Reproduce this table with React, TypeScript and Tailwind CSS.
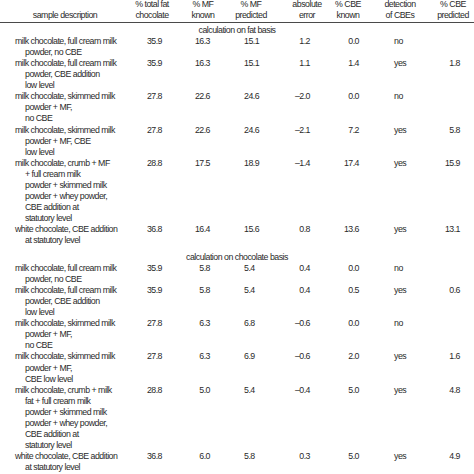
import React from "react";

type Row = {
  desc: string[];
  fat: string;
  mfKnown: string;
  mfPred: string;
  err: string;
  cbeKnown: string;
  detect: string;
  cbePred: string;
};

const fatBasis: Row[] = [
  { desc: ["milk chocolate, full cream milk", "powder, no CBE"], fat: "35.9", mfKnown: "16.3", mfPred: "15.1", err: "1.2", cbeKnown: "0.0", detect: "no", cbePred: "" },
  { desc: ["milk chocolate, full cream milk", "powder, CBE addition", "low level"], fat: "35.9", mfKnown: "16.3", mfPred: "15.1", err: "1.1", cbeKnown: "1.4", detect: "yes", cbePred: "1.8" },
  { desc: ["milk chocolate, skimmed milk", "powder + MF,", "no CBE"], fat: "27.8", mfKnown: "22.6", mfPred: "24.6", err: "–2.0", cbeKnown: "0.0", detect: "no", cbePred: "" },
  { desc: ["milk chocolate, skimmed milk", "powder + MF, CBE", "low level"], fat: "27.8", mfKnown: "22.6", mfPred: "24.6", err: "–2.1", cbeKnown: "7.2", detect: "yes", cbePred: "5.8" },
  { desc: ["milk chocolate, crumb + MF", "+ full cream milk", "powder + skimmed milk", "powder + whey powder,", "CBE addition at", "statutory level"], fat: "28.8", mfKnown: "17.5", mfPred: "18.9", err: "–1.4", cbeKnown: "17.4", detect: "yes", cbePred: "15.9" },
  { desc: ["white chocolate, CBE addition", "at statutory level"], fat: "36.8", mfKnown: "16.4", mfPred: "15.6", err: "0.8", cbeKnown: "13.6", detect: "yes", cbePred: "13.1" },
];

const chocBasis: Row[] = [
  { desc: ["milk chocolate, full cream milk", "powder, no CBE"], fat: "35.9", mfKnown: "5.8", mfPred: "5.4", err: "0.4", cbeKnown: "0.0", detect: "no", cbePred: "" },
  { desc: ["milk chocolate, full cream milk", "powder, CBE addition", "low level"], fat: "35.9", mfKnown: "5.8", mfPred: "5.4", err: "0.4", cbeKnown: "0.5", detect: "yes", cbePred: "0.6" },
  { desc: ["milk chocolate, skimmed milk", "powder + MF,", "no CBE"], fat: "27.8", mfKnown: "6.3", mfPred: "6.8", err: "–0.6", cbeKnown: "0.0", detect: "no", cbePred: "" },
  { desc: ["milk chocolate, skimmed milk", "powder + MF,", "CBE low level"], fat: "27.8", mfKnown: "6.3", mfPred: "6.9", err: "–0.6", cbeKnown: "2.0", detect: "yes", cbePred: "1.6" },
  { desc: ["milk chocolate, crumb + milk", "fat + full cream milk", "powder + skimmed milk", "powder + whey powder,", "CBE addition at", "statutory level"], fat: "28.8", mfKnown: "5.0", mfPred: "5.4", err: "–0.4", cbeKnown: "5.0", detect: "yes", cbePred: "4.8" },
  { desc: ["white chocolate, CBE addition", "at statutory level"], fat: "36.8", mfKnown: "6.0", mfPred: "5.8", err: "0.3", cbeKnown: "5.0", detect: "yes", cbePred: "4.9" },
];

function HeadCell({ top, bottom, className }: { top?: string; bottom: string; className: string }) {
  return (
    <div className={`flex flex-col items-center whitespace-nowrap ${className}`}>
      <span>{top ?? "\u00a0"}</span>
      <span>{bottom}</span>
    </div>
  );
}

function DataRow({ row }: { row: Row }) {
  return (
    <div className="flex items-start whitespace-nowrap">
      <div className="w-[130px] pl-[15px]">
        {row.desc.map((line, i) => (
          <div key={i} className={i > 0 ? "pl-[10px]" : ""}>
            {line}
          </div>
        ))}
      </div>
      <div className="w-[32px] text-right">{row.fat}</div>
      <div className="w-[48px] text-right">{row.mfKnown}</div>
      <div className="w-[60px] pl-[34px]">{row.mfPred}</div>
      <div className="w-[40px] text-right">{row.err}</div>
      <div className="w-[49px] text-right">{row.cbeKnown}</div>
      <div className="w-[61px] pl-[35px]">{row.detect}</div>
      <div className="w-[40px] text-right">{row.cbePred}</div>
    </div>
  );
}

export default function App() {
  return (
    <div
      className="w-[474px] h-[474px] overflow-hidden bg-white text-[#2a2a2a] text-[8.8px] tracking-[-0.5px] leading-[11.05px]"
      style={{ fontFamily: "'Liberation Sans', Arial, sans-serif" }}
    >
      {/* header */}
      <div className="-mt-[1.5px] pb-[1.5px] flex border-b border-[#4a4a4a]">
        <HeadCell bottom="sample description" className="w-[130px]" />
        <HeadCell top="% total fat" bottom="chocolate" className="w-[40px] ml-[2px]" />
        <HeadCell top="% MF" bottom="known" className="w-[40px] ml-[11px]" />
        <HeadCell top="% MF" bottom="predicted" className="w-[40px] ml-[8px]" />
        <HeadCell top="absolute" bottom="error" className="w-[40px] ml-[16px]" />
        <HeadCell top="% CBE" bottom="known" className="w-[40px] ml-[1px]" />
        <HeadCell top="detection" bottom="of CBEs" className="w-[40px] ml-[12px]" />
        <HeadCell top="% CBE" bottom="predicted" className="w-[40px] ml-[13px]" />
      </div>

      <div className="pt-[2px] text-center">calculation on fat basis</div>
      {fatBasis.map((r, i) => (
        <DataRow key={i} row={r} />
      ))}

      <div className="mt-[6px] text-center">calculation on chocolate basis</div>
      {chocBasis.map((r, i) => (
        <DataRow key={i} row={r} />
      ))}
    </div>
  );
}
